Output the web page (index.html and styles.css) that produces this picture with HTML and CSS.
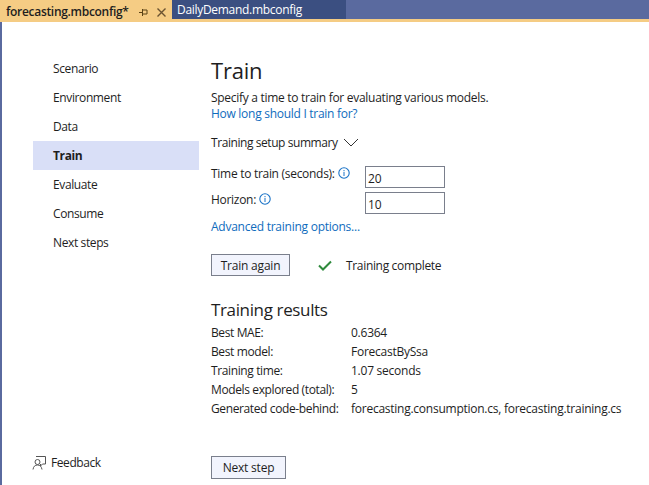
FILE: index.html
```html
<!DOCTYPE html>
<html lang="en">
<head>
<meta charset="utf-8">
<title>forecasting.mbconfig</title>
<link rel="stylesheet" href="styles.css">
</head>
<body>
<div class="window">
  <div class="tabs">
    <div class="tab tab-active">
      <span class="tab-name">forecasting.mbconfig*</span>
      <svg class="tab-icon pin" width="9" height="7" viewBox="0 0 9 7"><path d="M0 3.500h3M3.500 0v7M3.500 1h4.500v4h-4.500" fill="none" stroke="#5b4316"/></svg>
      <svg class="tab-icon close" width="9" height="9" viewBox="0 0 9 9"><path d="M.5 .5l8 8M8.500 .5l-8 8" fill="none" stroke="#6b5330" stroke-width="1.400"/></svg>
    </div>
    <div class="tab tab-other">DailyDemand.mbconfig</div>
  </div>
  <div class="body">
    <nav class="side">
      <ul class="steps">
        <li class="step">Scenario</li>
        <li class="step">Environment</li>
        <li class="step">Data</li>
        <li class="step step-current">Train</li>
        <li class="step">Evaluate</li>
        <li class="step">Consume</li>
        <li class="step">Next steps</li>
      </ul>
      <div class="feedback">
        <svg width="15" height="15" viewBox="0 0 15 15" fill="none" stroke="#555"><path d="M4 1.500h9.500v7.500h-3l-2 2v-2"/><circle cx="5.500" cy="7" r="2.500"/><path d="M1 14.500c.4-3 2-4.500 4.500-4.500s4 1.500 4.500 4.500"/></svg>
        <span>Feedback</span>
      </div>
    </nav>
    <main class="main">
      <h1 class="title">Train</h1>
      <p class="line">Specify a time to train for evaluating various models.</p>
      <a class="link link-howlong">How long should I train for?</a>
      <div class="summary">
        <span>Training setup summary</span>
        <svg width="16" height="9" viewBox="0 0 16 9"><path d="M1 1l7 7 7-7" fill="none" stroke="#333"/></svg>
      </div>
      <div class="fields">
        <div class="field">
          <span class="field-label">Time to train (seconds):
            <svg class="info" width="12" height="12" viewBox="0 0 12 12"><circle cx="6" cy="6" r="5.200" fill="none" stroke="#1a73c7" stroke-width="1.100"/><path d="M6 5v4M6 3v1.200" stroke="#1a73c7"/></svg>
          </span>
          <span class="input">20</span>
        </div>
        <div class="field">
          <span class="field-label">Horizon:
            <svg class="info" width="12" height="12" viewBox="0 0 12 12"><circle cx="6" cy="6" r="5.200" fill="none" stroke="#1a73c7" stroke-width="1.100"/><path d="M6 5v4M6 3v1.200" stroke="#1a73c7"/></svg>
          </span>
          <span class="input">10</span>
        </div>
      </div>
      <a class="link link-advanced">Advanced training options...</a>
      <div class="train-row">
        <button class="btn">Train again</button>
        <svg class="check" width="14" height="11" viewBox="0 0 14 11"><path d="M1 5.500l4 4 8-8" fill="none" stroke="#2f8a3d" stroke-width="2"/></svg>
        <span>Training complete</span>
      </div>
      <h2 class="results-title">Training results</h2>
      <dl class="results">
        <dt>Best MAE:</dt><dd>0.6364</dd>
        <dt>Best model:</dt><dd>ForecastBySsa</dd>
        <dt>Training time:</dt><dd>1.07 seconds</dd>
        <dt>Models explored (total):</dt><dd>5</dd>
        <dt>Generated code-behind:</dt><dd>forecasting.consumption.cs, forecasting.training.cs</dd>
      </dl>
      <button class="btn btn-next">Next step</button>
    </main>
  </div>
</div>
</body>
</html>
```
FILE: styles.css
```css
* { box-sizing: border-box; }
html, body { margin: 0; height: 100%; }
body {
  font-family: "Open Sans", "Noto Sans", sans-serif;
  font-size: 12px;
  color: #1e1e1e;
  background: #fff;
  overflow: hidden;
}
.window {
  width: 649px;
  height: 485px;
  display: flex;
  flex-direction: column;
  border-left: 2px solid #5a6a9f;
}
.tabs {
  height: 22px;
  flex: none;
  display: flex;
  align-items: flex-start;
  background: #5a6a9f;
  border-bottom: 3px solid #f5cc84;
  margin-left: -2px;
}
.tab { display: flex; align-items: center; }
.tab-active {
  width: 172px;
  height: 22px;
  background: #f5cc84;
  padding-left: 6px;
  color: #1e1e1e;
  font-weight: 600;
}
.tab-name { width: 133px; letter-spacing: -0.3px; white-space: nowrap; }
.tab-icon { flex: none; margin-top: 2px; }
.close { margin-left: 9px; }
.tab-other {
  width: 174px;
  height: 19px;
  background: #3b4f81;
  color: #fff;
  padding-left: 5px;
  letter-spacing: -0.3px;
}
.body { flex: 1; display: flex; min-height: 0; }
.side {
  width: 197px;
  flex: none;
  padding: 32px 0 14px 31px;
  display: flex;
  flex-direction: column;
  justify-content: space-between;
}
.steps { list-style: none; margin: 0; padding: 0; }
.step { height: 29px; line-height: 29px; padding-left: 20px; letter-spacing: -0.38px; }
.step-current { background: #d9dff7; font-weight: 700; }
.feedback { display: flex; align-items: center; gap: 4px; letter-spacing: -0.42px; margin-left: -1px; }
.main { flex: 1; padding: 33px 0 0 12px; min-width: 0; }
.title { margin: 0; font-size: 22px; font-weight: 400; line-height: 30px; letter-spacing: -0.2px; }
.line { margin: 5px 0 0; line-height: 16px; letter-spacing: -0.29px; }
.link { display: block; color: #0f6cbd; line-height: 16px; letter-spacing: -0.22px; }
.link-howlong { letter-spacing: -0.28px; }
.summary { display: flex; align-items: center; gap: 5px; margin-top: 12px; height: 16px; letter-spacing: -0.43px; }
.fields { margin-top: 16px; display: flex; flex-direction: column; gap: 4px; }
.field { display: flex; height: 22px; }
.field-label { width: 154px; letter-spacing: -0.29px; line-height: 16px; }
.info { vertical-align: -1px; }
.input { width: 80px; height: 22px; border: 1px solid #7a7f8c; padding: 4px 2px; line-height: 16px; }
.link-advanced { margin-top: 5px; letter-spacing: -0.25px; }
.train-row { display: flex; align-items: center; margin-top: 19px; letter-spacing: -0.33px; }
.btn {
  font: inherit;
  color: inherit;
  background: #f2f4fd;
  border: 1px solid #7a7f8c;
  height: 22px;
  width: 79px;
  padding: 0;
  letter-spacing: -0.2px;
}
.check { margin: 0 14px 0 28px; }
.results-title { margin: 22px 0 0; font-size: 17px; font-weight: 400; line-height: 24px; letter-spacing: -0.36px; }
.results { margin: 1px 0 0; display: grid; grid-template-columns: 140px 1fr; grid-auto-rows: 19px; line-height: 19px; letter-spacing: -0.25px; }
.results dt { letter-spacing: -0.38px; }
.results dd { margin: 0; }
.btn-next { display: block; margin-top: 38px; width: 75px; height: 23px; }
```
